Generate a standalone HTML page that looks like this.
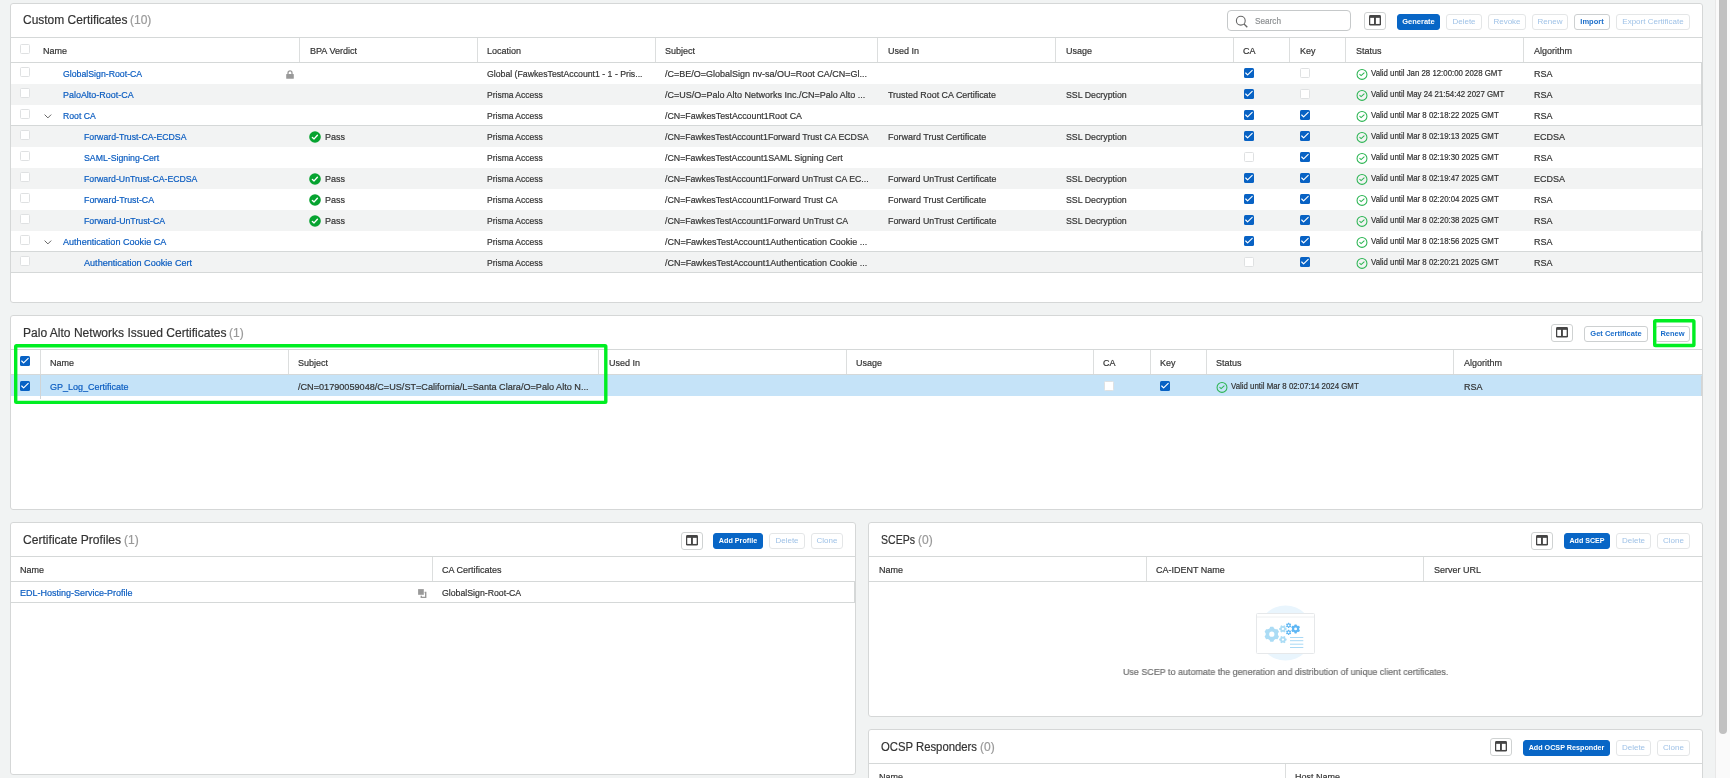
<!DOCTYPE html>
<html><head><meta charset="utf-8"><style>
html,body{margin:0;padding:0;}
body{width:1730px;height:778px;overflow:hidden;position:relative;background:#f1f3f3;will-change:transform;font-family:"Liberation Sans",sans-serif;}
.a{position:absolute;}
.t{position:absolute;white-space:nowrap;-webkit-text-stroke:0.2px currentColor;-webkit-font-smoothing:antialiased;}
.cbu{width:10px;height:10px;box-sizing:border-box;border:1px solid #dfe1e2;border-radius:1.5px;background:#fff;}
.cbc{width:10px;height:10px;border-radius:1.5px;background:#0862c4;}
.cbc svg{display:block;}
.colbtn{width:22px;height:18px;box-sizing:border-box;border:1px solid #cfd2d2;border-radius:3px;background:#fff;}
.btn{box-sizing:border-box;border-radius:3px;text-align:center;white-space:nowrap;}
.bp{background:#0866c6;border:1px solid #0866c6;color:#fff;font-weight:700;font-size:7.5px;}
.bs{background:#fff;border:1px solid #cdd0d1;color:#1a6dca;font-weight:700;font-size:7.5px;}
.bd{background:#fff;border:1px solid #e4e6e7;color:#9fc2e7;font-size:8px;}
</style></head><body>
<div class="a" style="left:1715px;top:0px;width:15px;height:778px;background:#fafafa;border-left:1px solid #e8e8e8;box-sizing:border-box"></div>
<div class="a" style="left:1719px;top:-10px;width:8px;height:744px;background:#c1c1c1;border-radius:4px"></div>
<div class="a" style="left:10px;top:3px;width:1693px;height:300px;background:#fff;border:1px solid #d5d7d7;border-radius:3px;box-sizing:border-box"></div>
<div class="t" style="left:23px;top:14.00px;font-size:12.500px;line-height:12.500px;color:#333;font-weight:400;transform:scaleX(0.9581);transform-origin:0 0;">Custom Certificates</div>
<div class="t" style="left:130.3px;top:14.00px;font-size:12.500px;line-height:12.500px;color:#999;font-weight:400;transform:scaleX(0.9608);transform-origin:0 0;">(10)</div>
<div class="a" style="left:1227px;top:10px;width:124px;height:21px;border:1px solid #c6c9ca;border-radius:4px;box-sizing:border-box;background:#fff"></div>
<svg class="a" style="left:1235px;top:15px" width="14" height="13" viewBox="0 0 14 13"><circle cx="5.8" cy="5.7" r="4.4" fill="none" stroke="#666" stroke-width="1.1"/><path d="M9 9 L12.3 12.2" stroke="#666" stroke-width="1.3"/></svg>
<div class="t" style="left:1255px;top:17.00px;font-size:9.300px;line-height:9.300px;color:#8d9092;font-weight:400;transform:scaleX(0.8824);transform-origin:0 0;">Search</div>
<div class="a colbtn" style="left:1364px;top:12px"></div><svg class="a" style="left:1369px;top:15px" width="12" height="11" viewBox="0 0 12 11"><rect x="0" y="0" width="12" height="10.6" rx="1.4" fill="#454545"/><rect x="1.25" y="2.85" width="3.75" height="6.1" fill="#fff"/><rect x="6.9" y="2.85" width="3.75" height="6.1" fill="#fff"/></svg>
<div class="a btn bp" style="left:1397px;top:14px;width:43px;height:16px;line-height:14px;">Generate</div>
<div class="a btn bd" style="left:1446px;top:14px;width:36px;height:16px;line-height:14px;">Delete</div>
<div class="a btn bd" style="left:1488px;top:14px;width:38px;height:16px;line-height:14px;">Revoke</div>
<div class="a btn bd" style="left:1532px;top:14px;width:36px;height:16px;line-height:14px;">Renew</div>
<div class="a btn bs" style="left:1574px;top:14px;width:36px;height:16px;line-height:14px;">Import</div>
<div class="a btn bd" style="left:1616px;top:14px;width:74px;height:16px;line-height:14px;">Export Certificate</div>
<div class="a" style="left:11px;top:37px;width:1691px;height:1px;background:#d5d8d8"></div>
<div class="a" style="left:11px;top:62px;width:1691px;height:1px;background:#d5d8d8"></div>
<div class="a cbu" style="left:20px;top:44px"></div>
<div class="t" style="left:42.6px;top:46.00px;font-size:9.500px;line-height:9.500px;color:#333;font-weight:400;transform:scaleX(0.9474);transform-origin:0 0;">Name</div>
<div class="t" style="left:310px;top:46.00px;font-size:9.500px;line-height:9.500px;color:#333;font-weight:400;transform:scaleX(0.9502);transform-origin:0 0;">BPA Verdict</div>
<div class="t" style="left:487px;top:46.00px;font-size:9.500px;line-height:9.500px;color:#333;font-weight:400;transform:scaleX(0.9474);transform-origin:0 0;">Location</div>
<div class="t" style="left:665px;top:46.00px;font-size:9.500px;line-height:9.500px;color:#333;font-weight:400;transform:scaleX(0.9474);transform-origin:0 0;">Subject</div>
<div class="t" style="left:888px;top:46.00px;font-size:9.500px;line-height:9.500px;color:#333;font-weight:400;transform:scaleX(0.9474);transform-origin:0 0;">Used In</div>
<div class="t" style="left:1066px;top:46.00px;font-size:9.500px;line-height:9.500px;color:#333;font-weight:400;transform:scaleX(0.9474);transform-origin:0 0;">Usage</div>
<div class="t" style="left:1243px;top:46.00px;font-size:9.500px;line-height:9.500px;color:#333;font-weight:400;transform:scaleX(0.9474);transform-origin:0 0;">CA</div>
<div class="t" style="left:1299.5px;top:46.00px;font-size:9.500px;line-height:9.500px;color:#333;font-weight:400;transform:scaleX(0.9474);transform-origin:0 0;">Key</div>
<div class="t" style="left:1355.5px;top:46.00px;font-size:9.500px;line-height:9.500px;color:#333;font-weight:400;transform:scaleX(0.9474);transform-origin:0 0;">Status</div>
<div class="t" style="left:1533.5px;top:46.00px;font-size:9.500px;line-height:9.500px;color:#333;font-weight:400;transform:scaleX(0.9474);transform-origin:0 0;">Algorithm</div>
<div class="a" style="left:299px;top:38px;width:1px;height:24px;background:#dcdede"></div>
<div class="a" style="left:477px;top:38px;width:1px;height:24px;background:#dcdede"></div>
<div class="a" style="left:655px;top:38px;width:1px;height:24px;background:#dcdede"></div>
<div class="a" style="left:877px;top:38px;width:1px;height:24px;background:#dcdede"></div>
<div class="a" style="left:1055px;top:38px;width:1px;height:24px;background:#dcdede"></div>
<div class="a" style="left:1233px;top:38px;width:1px;height:24px;background:#dcdede"></div>
<div class="a" style="left:1289px;top:38px;width:1px;height:24px;background:#dcdede"></div>
<div class="a" style="left:1345px;top:38px;width:1px;height:24px;background:#dcdede"></div>
<div class="a" style="left:1523px;top:38px;width:1px;height:24px;background:#dcdede"></div>
<div class="a" style="left:1701px;top:63px;width:1px;height:21px;background:#d5d8d8"></div>
<div class="a cbu" style="left:20px;top:67px"></div>
<div class="t" style="left:63px;top:69.00px;font-size:9.500px;line-height:9.500px;color:#0a5cc0;font-weight:400;transform:scaleX(0.9201);transform-origin:0 0;">GlobalSign-Root-CA</div>
<svg class="a" style="left:286px;top:70px" width="8" height="9" viewBox="0 0 8 9"><path d="M2 4 V2.9 A2 2 0 0 1 6 2.9 V4" fill="none" stroke="#999" stroke-width="1.3"/><rect x="0.2" y="4" width="7.6" height="4.8" rx="0.6" fill="#999"/></svg>
<div class="t" style="left:487px;top:69.00px;font-size:9.500px;line-height:9.500px;color:#333;font-weight:400;transform:scaleX(0.9175);transform-origin:0 0;">Global (FawkesTestAccount1 - 1 - Pris...</div>
<div class="t" style="left:665px;top:69.00px;font-size:9.500px;line-height:9.500px;color:#333;font-weight:400;transform:scaleX(0.9474);transform-origin:0 0;">/C=BE/O=GlobalSign nv-sa/OU=Root CA/CN=Gl...</div>
<div class="a cbc" style="left:1244px;top:68px"><svg width="10" height="10" viewBox="0 0 10 10"><path d="M1.7 5.0 L3.6 6.9 L8.2 2.4" fill="none" stroke="#fff" stroke-width="1.15" stroke-linecap="round" stroke-linejoin="round"/></svg></div>
<div class="a cbu" style="left:1300px;top:68px"></div>
<svg class="a" style="left:1355.5px;top:68px" width="12" height="13" viewBox="0 0 12 13"><circle cx="6" cy="6.4" r="4.95" fill="none" stroke="#2cb553" stroke-width="1.05"/><path d="M3.5 6.2 L5.1 7.6 L8.4 4.6" fill="none" stroke="#2cb553" stroke-width="1.05"/></svg>
<div class="t" style="left:1371px;top:69.00px;font-size:8.500px;line-height:8.500px;color:#333;font-weight:400;transform:scaleX(0.9235);transform-origin:0 0;">Valid until Jan 28 12:00:00 2028 GMT</div>
<div class="t" style="left:1533.5px;top:69.00px;font-size:9.500px;line-height:9.500px;color:#333;font-weight:400;transform:scaleX(0.9474);transform-origin:0 0;">RSA</div>
<div class="a" style="left:11px;top:84px;width:1691px;height:21px;background:#f2f3f3"></div>
<div class="a" style="left:1701px;top:84px;width:1px;height:21px;background:#d5d8d8"></div>
<div class="a cbu" style="left:20px;top:88px"></div>
<div class="t" style="left:63px;top:90.00px;font-size:9.500px;line-height:9.500px;color:#0a5cc0;font-weight:400;transform:scaleX(0.9416);transform-origin:0 0;">PaloAlto-Root-CA</div>
<div class="t" style="left:487px;top:90.00px;font-size:9.500px;line-height:9.500px;color:#333;font-weight:400;transform:scaleX(0.8957);transform-origin:0 0;">Prisma Access</div>
<div class="t" style="left:665px;top:90.00px;font-size:9.500px;line-height:9.500px;color:#333;font-weight:400;transform:scaleX(0.9474);transform-origin:0 0;">/C=US/O=Palo Alto Networks Inc./CN=Palo Alto ...</div>
<div class="t" style="left:888px;top:90.00px;font-size:9.500px;line-height:9.500px;color:#333;font-weight:400;transform:scaleX(0.9368);transform-origin:0 0;">Trusted Root CA Certificate</div>
<div class="t" style="left:1066px;top:90.00px;font-size:9.500px;line-height:9.500px;color:#333;font-weight:400;transform:scaleX(0.9245);transform-origin:0 0;">SSL Decryption</div>
<div class="a cbc" style="left:1244px;top:89px"><svg width="10" height="10" viewBox="0 0 10 10"><path d="M1.7 5.0 L3.6 6.9 L8.2 2.4" fill="none" stroke="#fff" stroke-width="1.15" stroke-linecap="round" stroke-linejoin="round"/></svg></div>
<div class="a cbu" style="left:1300px;top:89px"></div>
<svg class="a" style="left:1355.5px;top:89px" width="12" height="13" viewBox="0 0 12 13"><circle cx="6" cy="6.4" r="4.95" fill="none" stroke="#2cb553" stroke-width="1.05"/><path d="M3.5 6.2 L5.1 7.6 L8.4 4.6" fill="none" stroke="#2cb553" stroke-width="1.05"/></svg>
<div class="t" style="left:1371px;top:90.00px;font-size:8.500px;line-height:8.500px;color:#333;font-weight:400;transform:scaleX(0.9235);transform-origin:0 0;">Valid until May 24 21:54:42 2027 GMT</div>
<div class="t" style="left:1533.5px;top:90.00px;font-size:9.500px;line-height:9.500px;color:#333;font-weight:400;transform:scaleX(0.9474);transform-origin:0 0;">RSA</div>
<div class="a" style="left:11px;top:125px;width:1691px;height:1px;background:#d5d8d8"></div>
<div class="a" style="left:1701px;top:105px;width:1px;height:21px;background:#d5d8d8"></div>
<div class="a cbu" style="left:20px;top:109px"></div>
<svg class="a" style="left:44px;top:114px" width="8" height="5" viewBox="0 0 8 5"><path d="M0.6 0.6 L3.9 3.9 L7.2 0.6" fill="none" stroke="#555" stroke-width="0.9"/></svg>
<div class="t" style="left:63px;top:111.00px;font-size:9.500px;line-height:9.500px;color:#0a5cc0;font-weight:400;transform:scaleX(0.9135);transform-origin:0 0;">Root CA</div>
<div class="t" style="left:487px;top:111.00px;font-size:9.500px;line-height:9.500px;color:#333;font-weight:400;transform:scaleX(0.8957);transform-origin:0 0;">Prisma Access</div>
<div class="t" style="left:665px;top:111.00px;font-size:9.500px;line-height:9.500px;color:#333;font-weight:400;transform:scaleX(0.9283);transform-origin:0 0;">/CN=FawkesTestAccount1Root CA</div>
<div class="a cbc" style="left:1244px;top:110px"><svg width="10" height="10" viewBox="0 0 10 10"><path d="M1.7 5.0 L3.6 6.9 L8.2 2.4" fill="none" stroke="#fff" stroke-width="1.15" stroke-linecap="round" stroke-linejoin="round"/></svg></div>
<div class="a cbc" style="left:1300px;top:110px"><svg width="10" height="10" viewBox="0 0 10 10"><path d="M1.7 5.0 L3.6 6.9 L8.2 2.4" fill="none" stroke="#fff" stroke-width="1.15" stroke-linecap="round" stroke-linejoin="round"/></svg></div>
<svg class="a" style="left:1355.5px;top:110px" width="12" height="13" viewBox="0 0 12 13"><circle cx="6" cy="6.4" r="4.95" fill="none" stroke="#2cb553" stroke-width="1.05"/><path d="M3.5 6.2 L5.1 7.6 L8.4 4.6" fill="none" stroke="#2cb553" stroke-width="1.05"/></svg>
<div class="t" style="left:1371px;top:111.00px;font-size:8.500px;line-height:8.500px;color:#333;font-weight:400;transform:scaleX(0.9235);transform-origin:0 0;">Valid until Mar 8 02:18:22 2025 GMT</div>
<div class="t" style="left:1533.5px;top:111.00px;font-size:9.500px;line-height:9.500px;color:#333;font-weight:400;transform:scaleX(0.9474);transform-origin:0 0;">RSA</div>
<div class="a" style="left:11px;top:126px;width:1691px;height:21px;background:#f2f3f3"></div>
<div class="a cbu" style="left:20px;top:130px"></div>
<div class="t" style="left:84px;top:132.00px;font-size:9.500px;line-height:9.500px;color:#0a5cc0;font-weight:400;transform:scaleX(0.9188);transform-origin:0 0;">Forward-Trust-CA-ECDSA</div>
<svg class="a" style="left:309px;top:131px" width="12" height="12" viewBox="0 0 12 12"><circle cx="6" cy="6" r="5.8" fill="#06a330"/><path d="M3.4 6.4 L5.1 7.9 L8.4 4.3" fill="none" stroke="#fff" stroke-width="1.4" stroke-linecap="round" stroke-linejoin="round"/></svg>
<div class="t" style="left:325px;top:132.00px;font-size:9.500px;line-height:9.500px;color:#333;font-weight:400;transform:scaleX(0.9474);transform-origin:0 0;">Pass</div>
<div class="t" style="left:487px;top:132.00px;font-size:9.500px;line-height:9.500px;color:#333;font-weight:400;transform:scaleX(0.8957);transform-origin:0 0;">Prisma Access</div>
<div class="t" style="left:665px;top:132.00px;font-size:9.500px;line-height:9.500px;color:#333;font-weight:400;transform:scaleX(0.9214);transform-origin:0 0;">/CN=FawkesTestAccount1Forward Trust CA ECDSA</div>
<div class="t" style="left:888px;top:132.00px;font-size:9.500px;line-height:9.500px;color:#333;font-weight:400;transform:scaleX(0.9451);transform-origin:0 0;">Forward Trust Certificate</div>
<div class="t" style="left:1066px;top:132.00px;font-size:9.500px;line-height:9.500px;color:#333;font-weight:400;transform:scaleX(0.9245);transform-origin:0 0;">SSL Decryption</div>
<div class="a cbc" style="left:1244px;top:131px"><svg width="10" height="10" viewBox="0 0 10 10"><path d="M1.7 5.0 L3.6 6.9 L8.2 2.4" fill="none" stroke="#fff" stroke-width="1.15" stroke-linecap="round" stroke-linejoin="round"/></svg></div>
<div class="a cbc" style="left:1300px;top:131px"><svg width="10" height="10" viewBox="0 0 10 10"><path d="M1.7 5.0 L3.6 6.9 L8.2 2.4" fill="none" stroke="#fff" stroke-width="1.15" stroke-linecap="round" stroke-linejoin="round"/></svg></div>
<svg class="a" style="left:1355.5px;top:131px" width="12" height="13" viewBox="0 0 12 13"><circle cx="6" cy="6.4" r="4.95" fill="none" stroke="#2cb553" stroke-width="1.05"/><path d="M3.5 6.2 L5.1 7.6 L8.4 4.6" fill="none" stroke="#2cb553" stroke-width="1.05"/></svg>
<div class="t" style="left:1371px;top:132.00px;font-size:8.500px;line-height:8.500px;color:#333;font-weight:400;transform:scaleX(0.9235);transform-origin:0 0;">Valid until Mar 8 02:19:13 2025 GMT</div>
<div class="t" style="left:1533.5px;top:132.00px;font-size:9.500px;line-height:9.500px;color:#333;font-weight:400;transform:scaleX(0.9474);transform-origin:0 0;">ECDSA</div>
<div class="a cbu" style="left:20px;top:151px"></div>
<div class="t" style="left:84px;top:153.00px;font-size:9.500px;line-height:9.500px;color:#0a5cc0;font-weight:400;transform:scaleX(0.9189);transform-origin:0 0;">SAML-Signing-Cert</div>
<div class="t" style="left:487px;top:153.00px;font-size:9.500px;line-height:9.500px;color:#333;font-weight:400;transform:scaleX(0.8957);transform-origin:0 0;">Prisma Access</div>
<div class="t" style="left:665px;top:153.00px;font-size:9.500px;line-height:9.500px;color:#333;font-weight:400;transform:scaleX(0.9245);transform-origin:0 0;">/CN=FawkesTestAccount1SAML Signing Cert</div>
<div class="a cbu" style="left:1244px;top:152px"></div>
<div class="a cbc" style="left:1300px;top:152px"><svg width="10" height="10" viewBox="0 0 10 10"><path d="M1.7 5.0 L3.6 6.9 L8.2 2.4" fill="none" stroke="#fff" stroke-width="1.15" stroke-linecap="round" stroke-linejoin="round"/></svg></div>
<svg class="a" style="left:1355.5px;top:152px" width="12" height="13" viewBox="0 0 12 13"><circle cx="6" cy="6.4" r="4.95" fill="none" stroke="#2cb553" stroke-width="1.05"/><path d="M3.5 6.2 L5.1 7.6 L8.4 4.6" fill="none" stroke="#2cb553" stroke-width="1.05"/></svg>
<div class="t" style="left:1371px;top:153.00px;font-size:8.500px;line-height:8.500px;color:#333;font-weight:400;transform:scaleX(0.9235);transform-origin:0 0;">Valid until Mar 8 02:19:30 2025 GMT</div>
<div class="t" style="left:1533.5px;top:153.00px;font-size:9.500px;line-height:9.500px;color:#333;font-weight:400;transform:scaleX(0.9474);transform-origin:0 0;">RSA</div>
<div class="a" style="left:11px;top:168px;width:1691px;height:21px;background:#f2f3f3"></div>
<div class="a cbu" style="left:20px;top:172px"></div>
<div class="t" style="left:84px;top:174.00px;font-size:9.500px;line-height:9.500px;color:#0a5cc0;font-weight:400;transform:scaleX(0.9167);transform-origin:0 0;">Forward-UnTrust-CA-ECDSA</div>
<svg class="a" style="left:309px;top:173px" width="12" height="12" viewBox="0 0 12 12"><circle cx="6" cy="6" r="5.8" fill="#06a330"/><path d="M3.4 6.4 L5.1 7.9 L8.4 4.3" fill="none" stroke="#fff" stroke-width="1.4" stroke-linecap="round" stroke-linejoin="round"/></svg>
<div class="t" style="left:325px;top:174.00px;font-size:9.500px;line-height:9.500px;color:#333;font-weight:400;transform:scaleX(0.9474);transform-origin:0 0;">Pass</div>
<div class="t" style="left:487px;top:174.00px;font-size:9.500px;line-height:9.500px;color:#333;font-weight:400;transform:scaleX(0.8957);transform-origin:0 0;">Prisma Access</div>
<div class="t" style="left:665px;top:174.00px;font-size:9.500px;line-height:9.500px;color:#333;font-weight:400;transform:scaleX(0.9186);transform-origin:0 0;">/CN=FawkesTestAccount1Forward UnTrust CA EC...</div>
<div class="t" style="left:888px;top:174.00px;font-size:9.500px;line-height:9.500px;color:#333;font-weight:400;transform:scaleX(0.9319);transform-origin:0 0;">Forward UnTrust Certificate</div>
<div class="t" style="left:1066px;top:174.00px;font-size:9.500px;line-height:9.500px;color:#333;font-weight:400;transform:scaleX(0.9245);transform-origin:0 0;">SSL Decryption</div>
<div class="a cbc" style="left:1244px;top:173px"><svg width="10" height="10" viewBox="0 0 10 10"><path d="M1.7 5.0 L3.6 6.9 L8.2 2.4" fill="none" stroke="#fff" stroke-width="1.15" stroke-linecap="round" stroke-linejoin="round"/></svg></div>
<div class="a cbc" style="left:1300px;top:173px"><svg width="10" height="10" viewBox="0 0 10 10"><path d="M1.7 5.0 L3.6 6.9 L8.2 2.4" fill="none" stroke="#fff" stroke-width="1.15" stroke-linecap="round" stroke-linejoin="round"/></svg></div>
<svg class="a" style="left:1355.5px;top:173px" width="12" height="13" viewBox="0 0 12 13"><circle cx="6" cy="6.4" r="4.95" fill="none" stroke="#2cb553" stroke-width="1.05"/><path d="M3.5 6.2 L5.1 7.6 L8.4 4.6" fill="none" stroke="#2cb553" stroke-width="1.05"/></svg>
<div class="t" style="left:1371px;top:174.00px;font-size:8.500px;line-height:8.500px;color:#333;font-weight:400;transform:scaleX(0.9235);transform-origin:0 0;">Valid until Mar 8 02:19:47 2025 GMT</div>
<div class="t" style="left:1533.5px;top:174.00px;font-size:9.500px;line-height:9.500px;color:#333;font-weight:400;transform:scaleX(0.9474);transform-origin:0 0;">ECDSA</div>
<div class="a cbu" style="left:20px;top:193px"></div>
<div class="t" style="left:84px;top:195.00px;font-size:9.500px;line-height:9.500px;color:#0a5cc0;font-weight:400;transform:scaleX(0.9266);transform-origin:0 0;">Forward-Trust-CA</div>
<svg class="a" style="left:309px;top:194px" width="12" height="12" viewBox="0 0 12 12"><circle cx="6" cy="6" r="5.8" fill="#06a330"/><path d="M3.4 6.4 L5.1 7.9 L8.4 4.3" fill="none" stroke="#fff" stroke-width="1.4" stroke-linecap="round" stroke-linejoin="round"/></svg>
<div class="t" style="left:325px;top:195.00px;font-size:9.500px;line-height:9.500px;color:#333;font-weight:400;transform:scaleX(0.9474);transform-origin:0 0;">Pass</div>
<div class="t" style="left:487px;top:195.00px;font-size:9.500px;line-height:9.500px;color:#333;font-weight:400;transform:scaleX(0.8957);transform-origin:0 0;">Prisma Access</div>
<div class="t" style="left:665px;top:195.00px;font-size:9.500px;line-height:9.500px;color:#333;font-weight:400;transform:scaleX(0.9280);transform-origin:0 0;">/CN=FawkesTestAccount1Forward Trust CA</div>
<div class="t" style="left:888px;top:195.00px;font-size:9.500px;line-height:9.500px;color:#333;font-weight:400;transform:scaleX(0.9451);transform-origin:0 0;">Forward Trust Certificate</div>
<div class="t" style="left:1066px;top:195.00px;font-size:9.500px;line-height:9.500px;color:#333;font-weight:400;transform:scaleX(0.9245);transform-origin:0 0;">SSL Decryption</div>
<div class="a cbc" style="left:1244px;top:194px"><svg width="10" height="10" viewBox="0 0 10 10"><path d="M1.7 5.0 L3.6 6.9 L8.2 2.4" fill="none" stroke="#fff" stroke-width="1.15" stroke-linecap="round" stroke-linejoin="round"/></svg></div>
<div class="a cbc" style="left:1300px;top:194px"><svg width="10" height="10" viewBox="0 0 10 10"><path d="M1.7 5.0 L3.6 6.9 L8.2 2.4" fill="none" stroke="#fff" stroke-width="1.15" stroke-linecap="round" stroke-linejoin="round"/></svg></div>
<svg class="a" style="left:1355.5px;top:194px" width="12" height="13" viewBox="0 0 12 13"><circle cx="6" cy="6.4" r="4.95" fill="none" stroke="#2cb553" stroke-width="1.05"/><path d="M3.5 6.2 L5.1 7.6 L8.4 4.6" fill="none" stroke="#2cb553" stroke-width="1.05"/></svg>
<div class="t" style="left:1371px;top:195.00px;font-size:8.500px;line-height:8.500px;color:#333;font-weight:400;transform:scaleX(0.9235);transform-origin:0 0;">Valid until Mar 8 02:20:04 2025 GMT</div>
<div class="t" style="left:1533.5px;top:195.00px;font-size:9.500px;line-height:9.500px;color:#333;font-weight:400;transform:scaleX(0.9474);transform-origin:0 0;">RSA</div>
<div class="a" style="left:11px;top:210px;width:1691px;height:21px;background:#f2f3f3"></div>
<div class="a cbu" style="left:20px;top:214px"></div>
<div class="t" style="left:84px;top:216.00px;font-size:9.500px;line-height:9.500px;color:#0a5cc0;font-weight:400;transform:scaleX(0.9247);transform-origin:0 0;">Forward-UnTrust-CA</div>
<svg class="a" style="left:309px;top:215px" width="12" height="12" viewBox="0 0 12 12"><circle cx="6" cy="6" r="5.8" fill="#06a330"/><path d="M3.4 6.4 L5.1 7.9 L8.4 4.3" fill="none" stroke="#fff" stroke-width="1.4" stroke-linecap="round" stroke-linejoin="round"/></svg>
<div class="t" style="left:325px;top:216.00px;font-size:9.500px;line-height:9.500px;color:#333;font-weight:400;transform:scaleX(0.9474);transform-origin:0 0;">Pass</div>
<div class="t" style="left:487px;top:216.00px;font-size:9.500px;line-height:9.500px;color:#333;font-weight:400;transform:scaleX(0.8957);transform-origin:0 0;">Prisma Access</div>
<div class="t" style="left:665px;top:216.00px;font-size:9.500px;line-height:9.500px;color:#333;font-weight:400;transform:scaleX(0.9233);transform-origin:0 0;">/CN=FawkesTestAccount1Forward UnTrust CA</div>
<div class="t" style="left:888px;top:216.00px;font-size:9.500px;line-height:9.500px;color:#333;font-weight:400;transform:scaleX(0.9319);transform-origin:0 0;">Forward UnTrust Certificate</div>
<div class="t" style="left:1066px;top:216.00px;font-size:9.500px;line-height:9.500px;color:#333;font-weight:400;transform:scaleX(0.9245);transform-origin:0 0;">SSL Decryption</div>
<div class="a cbc" style="left:1244px;top:215px"><svg width="10" height="10" viewBox="0 0 10 10"><path d="M1.7 5.0 L3.6 6.9 L8.2 2.4" fill="none" stroke="#fff" stroke-width="1.15" stroke-linecap="round" stroke-linejoin="round"/></svg></div>
<div class="a cbc" style="left:1300px;top:215px"><svg width="10" height="10" viewBox="0 0 10 10"><path d="M1.7 5.0 L3.6 6.9 L8.2 2.4" fill="none" stroke="#fff" stroke-width="1.15" stroke-linecap="round" stroke-linejoin="round"/></svg></div>
<svg class="a" style="left:1355.5px;top:215px" width="12" height="13" viewBox="0 0 12 13"><circle cx="6" cy="6.4" r="4.95" fill="none" stroke="#2cb553" stroke-width="1.05"/><path d="M3.5 6.2 L5.1 7.6 L8.4 4.6" fill="none" stroke="#2cb553" stroke-width="1.05"/></svg>
<div class="t" style="left:1371px;top:216.00px;font-size:8.500px;line-height:8.500px;color:#333;font-weight:400;transform:scaleX(0.9235);transform-origin:0 0;">Valid until Mar 8 02:20:38 2025 GMT</div>
<div class="t" style="left:1533.5px;top:216.00px;font-size:9.500px;line-height:9.500px;color:#333;font-weight:400;transform:scaleX(0.9474);transform-origin:0 0;">RSA</div>
<div class="a" style="left:11px;top:251px;width:1691px;height:1px;background:#d5d8d8"></div>
<div class="a" style="left:1701px;top:231px;width:1px;height:21px;background:#d5d8d8"></div>
<div class="a cbu" style="left:20px;top:235px"></div>
<svg class="a" style="left:44px;top:240px" width="8" height="5" viewBox="0 0 8 5"><path d="M0.6 0.6 L3.9 3.9 L7.2 0.6" fill="none" stroke="#555" stroke-width="0.9"/></svg>
<div class="t" style="left:63px;top:237.00px;font-size:9.500px;line-height:9.500px;color:#0a5cc0;font-weight:400;transform:scaleX(0.9542);transform-origin:0 0;">Authentication Cookie CA</div>
<div class="t" style="left:487px;top:237.00px;font-size:9.500px;line-height:9.500px;color:#333;font-weight:400;transform:scaleX(0.8957);transform-origin:0 0;">Prisma Access</div>
<div class="t" style="left:665px;top:237.00px;font-size:9.500px;line-height:9.500px;color:#333;font-weight:400;transform:scaleX(0.9420);transform-origin:0 0;">/CN=FawkesTestAccount1Authentication Cookie ...</div>
<div class="a cbc" style="left:1244px;top:236px"><svg width="10" height="10" viewBox="0 0 10 10"><path d="M1.7 5.0 L3.6 6.9 L8.2 2.4" fill="none" stroke="#fff" stroke-width="1.15" stroke-linecap="round" stroke-linejoin="round"/></svg></div>
<div class="a cbc" style="left:1300px;top:236px"><svg width="10" height="10" viewBox="0 0 10 10"><path d="M1.7 5.0 L3.6 6.9 L8.2 2.4" fill="none" stroke="#fff" stroke-width="1.15" stroke-linecap="round" stroke-linejoin="round"/></svg></div>
<svg class="a" style="left:1355.5px;top:236px" width="12" height="13" viewBox="0 0 12 13"><circle cx="6" cy="6.4" r="4.95" fill="none" stroke="#2cb553" stroke-width="1.05"/><path d="M3.5 6.2 L5.1 7.6 L8.4 4.6" fill="none" stroke="#2cb553" stroke-width="1.05"/></svg>
<div class="t" style="left:1371px;top:237.00px;font-size:8.500px;line-height:8.500px;color:#333;font-weight:400;transform:scaleX(0.9235);transform-origin:0 0;">Valid until Mar 8 02:18:56 2025 GMT</div>
<div class="t" style="left:1533.5px;top:237.00px;font-size:9.500px;line-height:9.500px;color:#333;font-weight:400;transform:scaleX(0.9474);transform-origin:0 0;">RSA</div>
<div class="a" style="left:11px;top:252px;width:1691px;height:21px;background:#f2f3f3"></div>
<div class="a" style="left:11px;top:272px;width:1691px;height:1px;background:#d5d8d8"></div>
<div class="a cbu" style="left:20px;top:256px"></div>
<div class="t" style="left:84px;top:258.00px;font-size:9.500px;line-height:9.500px;color:#0a5cc0;font-weight:400;transform:scaleX(0.9565);transform-origin:0 0;">Authentication Cookie Cert</div>
<div class="t" style="left:487px;top:258.00px;font-size:9.500px;line-height:9.500px;color:#333;font-weight:400;transform:scaleX(0.8957);transform-origin:0 0;">Prisma Access</div>
<div class="t" style="left:665px;top:258.00px;font-size:9.500px;line-height:9.500px;color:#333;font-weight:400;transform:scaleX(0.9420);transform-origin:0 0;">/CN=FawkesTestAccount1Authentication Cookie ...</div>
<div class="a cbu" style="left:1244px;top:257px"></div>
<div class="a cbc" style="left:1300px;top:257px"><svg width="10" height="10" viewBox="0 0 10 10"><path d="M1.7 5.0 L3.6 6.9 L8.2 2.4" fill="none" stroke="#fff" stroke-width="1.15" stroke-linecap="round" stroke-linejoin="round"/></svg></div>
<svg class="a" style="left:1355.5px;top:257px" width="12" height="13" viewBox="0 0 12 13"><circle cx="6" cy="6.4" r="4.95" fill="none" stroke="#2cb553" stroke-width="1.05"/><path d="M3.5 6.2 L5.1 7.6 L8.4 4.6" fill="none" stroke="#2cb553" stroke-width="1.05"/></svg>
<div class="t" style="left:1371px;top:258.00px;font-size:8.500px;line-height:8.500px;color:#333;font-weight:400;transform:scaleX(0.9235);transform-origin:0 0;">Valid until Mar 8 02:20:21 2025 GMT</div>
<div class="t" style="left:1533.5px;top:258.00px;font-size:9.500px;line-height:9.500px;color:#333;font-weight:400;transform:scaleX(0.9474);transform-origin:0 0;">RSA</div>
<div class="a" style="left:10px;top:315px;width:1693px;height:195px;background:#fff;border:1px solid #d5d7d7;border-radius:3px;box-sizing:border-box"></div>
<div class="t" style="left:23px;top:327.00px;font-size:12.500px;line-height:12.500px;color:#333;font-weight:400;transform:scaleX(0.9640);transform-origin:0 0;">Palo Alto Networks Issued Certificates</div>
<div class="t" style="left:228.9px;top:327.00px;font-size:12.500px;line-height:12.500px;color:#999;font-weight:400;transform:scaleX(0.9608);transform-origin:0 0;">(1)</div>
<div class="a colbtn" style="left:1551px;top:324px"></div><svg class="a" style="left:1556px;top:327px" width="12" height="11" viewBox="0 0 12 11"><rect x="0" y="0" width="12" height="10.6" rx="1.4" fill="#454545"/><rect x="1.25" y="2.85" width="3.75" height="6.1" fill="#fff"/><rect x="6.9" y="2.85" width="3.75" height="6.1" fill="#fff"/></svg>
<div class="a btn bs" style="left:1584px;top:326px;width:64px;height:16px;line-height:14px;">Get Certificate</div>
<div class="a btn bs" style="left:1655px;top:326px;width:35px;height:16px;line-height:14px;">Renew</div>
<div class="a" style="left:11px;top:349px;width:1691px;height:1px;background:#d5d8d8"></div>
<div class="a" style="left:11px;top:374px;width:1691px;height:1px;background:#d5d8d8"></div>
<div class="a cbc" style="left:20px;top:356px"><svg width="10" height="10" viewBox="0 0 10 10"><path d="M1.7 5.0 L3.6 6.9 L8.2 2.4" fill="none" stroke="#fff" stroke-width="1.15" stroke-linecap="round" stroke-linejoin="round"/></svg></div>
<div class="t" style="left:49.6px;top:358.00px;font-size:9.500px;line-height:9.500px;color:#333;font-weight:400;transform:scaleX(0.9474);transform-origin:0 0;">Name</div>
<div class="t" style="left:298px;top:358.00px;font-size:9.500px;line-height:9.500px;color:#333;font-weight:400;transform:scaleX(0.9474);transform-origin:0 0;">Subject</div>
<div class="t" style="left:608.7px;top:358.00px;font-size:9.500px;line-height:9.500px;color:#333;font-weight:400;transform:scaleX(0.9474);transform-origin:0 0;">Used In</div>
<div class="t" style="left:856.2px;top:358.00px;font-size:9.500px;line-height:9.500px;color:#333;font-weight:400;transform:scaleX(0.9474);transform-origin:0 0;">Usage</div>
<div class="t" style="left:1103.3px;top:358.00px;font-size:9.500px;line-height:9.500px;color:#333;font-weight:400;transform:scaleX(0.9474);transform-origin:0 0;">CA</div>
<div class="t" style="left:1159.5px;top:358.00px;font-size:9.500px;line-height:9.500px;color:#333;font-weight:400;transform:scaleX(0.9474);transform-origin:0 0;">Key</div>
<div class="t" style="left:1215.8px;top:358.00px;font-size:9.500px;line-height:9.500px;color:#333;font-weight:400;transform:scaleX(0.9474);transform-origin:0 0;">Status</div>
<div class="t" style="left:1463.6px;top:358.00px;font-size:9.500px;line-height:9.500px;color:#333;font-weight:400;transform:scaleX(0.9474);transform-origin:0 0;">Algorithm</div>
<div class="a" style="left:40px;top:350px;width:1px;height:24px;background:#dcdede"></div>
<div class="a" style="left:288px;top:350px;width:1px;height:24px;background:#dcdede"></div>
<div class="a" style="left:598px;top:350px;width:1px;height:24px;background:#dcdede"></div>
<div class="a" style="left:846px;top:350px;width:1px;height:24px;background:#dcdede"></div>
<div class="a" style="left:1093px;top:350px;width:1px;height:24px;background:#dcdede"></div>
<div class="a" style="left:1150px;top:350px;width:1px;height:24px;background:#dcdede"></div>
<div class="a" style="left:1206px;top:350px;width:1px;height:24px;background:#dcdede"></div>
<div class="a" style="left:1453px;top:350px;width:1px;height:24px;background:#dcdede"></div>
<div class="a" style="left:11px;top:375px;width:1691px;height:21px;background:#c5e3f8"></div>
<div class="a" style="left:40px;top:375px;width:1px;height:24px;background:#d0d4d6"></div>
<div class="a" style="left:1701px;top:376px;width:1px;height:20px;background:#d3d5d5"></div>
<div class="a cbc" style="left:20px;top:381px"><svg width="10" height="10" viewBox="0 0 10 10"><path d="M1.7 5.0 L3.6 6.9 L8.2 2.4" fill="none" stroke="#fff" stroke-width="1.15" stroke-linecap="round" stroke-linejoin="round"/></svg></div>
<div class="t" style="left:49.6px;top:382.00px;font-size:9.500px;line-height:9.500px;color:#0a5cc0;font-weight:400;transform:scaleX(0.9474);transform-origin:0 0;">GP_Log_Certificate</div>
<div class="t" style="left:298px;top:382.00px;font-size:9.500px;line-height:9.500px;color:#333;font-weight:400;transform:scaleX(0.9592);transform-origin:0 0;">/CN=01790059048/C=US/ST=California/L=Santa Clara/O=Palo Alto N...</div>
<div class="a cbu" style="left:1104px;top:381px"></div>
<div class="a cbc" style="left:1160px;top:381px"><svg width="10" height="10" viewBox="0 0 10 10"><path d="M1.7 5.0 L3.6 6.9 L8.2 2.4" fill="none" stroke="#fff" stroke-width="1.15" stroke-linecap="round" stroke-linejoin="round"/></svg></div>
<svg class="a" style="left:1215.5px;top:381px" width="12" height="13" viewBox="0 0 12 13"><circle cx="6" cy="6.4" r="4.95" fill="none" stroke="#2cb553" stroke-width="1.05"/><path d="M3.5 6.2 L5.1 7.6 L8.4 4.6" fill="none" stroke="#2cb553" stroke-width="1.05"/></svg>
<div class="t" style="left:1231px;top:382.00px;font-size:8.500px;line-height:8.500px;color:#333;font-weight:400;transform:scaleX(0.9235);transform-origin:0 0;">Valid until Mar 8 02:07:14 2024 GMT</div>
<div class="t" style="left:1463.6px;top:382.00px;font-size:9.500px;line-height:9.500px;color:#333;font-weight:400;transform:scaleX(0.9474);transform-origin:0 0;">RSA</div>
<svg class="a" style="left:12.2px;top:342.2px" width="597.5" height="64.10000000000002"><rect x="3.7" y="3.7" width="590.1" height="56.700000000000024" rx="0.8" fill="none" stroke="#00ee22" stroke-width="3.4"/></svg>
<svg class="a" style="left:1650.8px;top:317.4px" width="46.600000000000136" height="32.200000000000045"><rect x="3.7" y="3.7" width="39.20000000000014" height="24.800000000000047" rx="0.8" fill="none" stroke="#00ee22" stroke-width="3.4"/></svg>
<div class="a" style="left:10px;top:522px;width:846px;height:253px;background:#fff;border:1px solid #d5d7d7;border-radius:3px;box-sizing:border-box"></div>
<div class="t" style="left:23px;top:534.00px;font-size:12.500px;line-height:12.500px;color:#333;font-weight:400;transform:scaleX(0.9671);transform-origin:0 0;">Certificate Profiles</div>
<div class="t" style="left:123.6px;top:534.00px;font-size:12.500px;line-height:12.500px;color:#999;font-weight:400;transform:scaleX(0.9608);transform-origin:0 0;">(1)</div>
<div class="a colbtn" style="left:681px;top:532px"></div><svg class="a" style="left:686px;top:535px" width="12" height="11" viewBox="0 0 12 11"><rect x="0" y="0" width="12" height="10.6" rx="1.4" fill="#454545"/><rect x="1.25" y="2.85" width="3.75" height="6.1" fill="#fff"/><rect x="6.9" y="2.85" width="3.75" height="6.1" fill="#fff"/></svg>
<div class="a btn bp" style="left:713px;top:533px;width:50px;height:16px;line-height:14px;font-size:7.2px;">Add Profile</div>
<div class="a btn bd" style="left:769px;top:533px;width:36px;height:16px;line-height:14px;">Delete</div>
<div class="a btn bd" style="left:811px;top:533px;width:32px;height:16px;line-height:14px;">Clone</div>
<div class="a" style="left:11px;top:556px;width:844px;height:1px;background:#d5d8d8"></div>
<div class="a" style="left:11px;top:581px;width:844px;height:1px;background:#d5d8d8"></div>
<div class="t" style="left:19.6px;top:565.00px;font-size:9.500px;line-height:9.500px;color:#333;font-weight:400;transform:scaleX(0.9474);transform-origin:0 0;">Name</div>
<div class="t" style="left:442px;top:565.00px;font-size:9.500px;line-height:9.500px;color:#333;font-weight:400;transform:scaleX(0.9474);transform-origin:0 0;">CA Certificates</div>
<div class="a" style="left:432px;top:557px;width:1px;height:24px;background:#dcdede"></div>
<div class="t" style="left:19.6px;top:588.00px;font-size:9.500px;line-height:9.500px;color:#0a5cc0;font-weight:400;transform:scaleX(0.9474);transform-origin:0 0;">EDL-Hosting-Service-Profile</div>
<svg class="a" style="left:417px;top:588px" width="11" height="11" viewBox="0 0 11 11"><rect x="1.1" y="1.1" width="5.7" height="5.7" fill="#999"/><path d="M7.6 4.5 H8.7 V9.4 H4.3 V7.8" fill="none" stroke="#999" stroke-width="1.4"/></svg>
<div class="t" style="left:442px;top:588.00px;font-size:9.500px;line-height:9.500px;color:#333;font-weight:400;transform:scaleX(0.9201);transform-origin:0 0;">GlobalSign-Root-CA</div>
<div class="a" style="left:11px;top:602px;width:844px;height:1px;background:#d5d8d8"></div>
<div class="a" style="left:854px;top:582px;width:1px;height:21px;background:#d5d8d8"></div>
<div class="a" style="left:868px;top:522px;width:835px;height:195px;background:#fff;border:1px solid #d5d7d7;border-radius:3px;box-sizing:border-box"></div>
<div class="t" style="left:881px;top:534.00px;font-size:12.500px;line-height:12.500px;color:#333;font-weight:400;transform:scaleX(0.8437);transform-origin:0 0;">SCEPs</div>
<div class="t" style="left:917.5px;top:534.00px;font-size:12.500px;line-height:12.500px;color:#999;font-weight:400;transform:scaleX(0.9608);transform-origin:0 0;">(0)</div>
<div class="a colbtn" style="left:1531px;top:532px"></div><svg class="a" style="left:1536px;top:535px" width="12" height="11" viewBox="0 0 12 11"><rect x="0" y="0" width="12" height="10.6" rx="1.4" fill="#454545"/><rect x="1.25" y="2.85" width="3.75" height="6.1" fill="#fff"/><rect x="6.9" y="2.85" width="3.75" height="6.1" fill="#fff"/></svg>
<div class="a btn bp" style="left:1564px;top:533px;width:46px;height:16px;line-height:14px;font-size:7.1px;">Add SCEP</div>
<div class="a btn bd" style="left:1616px;top:533px;width:35px;height:16px;line-height:14px;">Delete</div>
<div class="a btn bd" style="left:1657px;top:533px;width:33px;height:16px;line-height:14px;">Clone</div>
<div class="a" style="left:869px;top:556px;width:833px;height:1px;background:#d5d8d8"></div>
<div class="a" style="left:869px;top:581px;width:833px;height:1px;background:#d5d8d8"></div>
<div class="t" style="left:878.7px;top:565.00px;font-size:9.500px;line-height:9.500px;color:#333;font-weight:400;transform:scaleX(0.9474);transform-origin:0 0;">Name</div>
<div class="t" style="left:1155.8px;top:565.00px;font-size:9.500px;line-height:9.500px;color:#333;font-weight:400;transform:scaleX(0.9474);transform-origin:0 0;">CA-IDENT Name</div>
<div class="t" style="left:1433.5px;top:565.00px;font-size:9.500px;line-height:9.500px;color:#333;font-weight:400;transform:scaleX(0.9474);transform-origin:0 0;">Server URL</div>
<div class="a" style="left:1146px;top:557px;width:1px;height:24px;background:#dcdede"></div>
<div class="a" style="left:1423px;top:557px;width:1px;height:24px;background:#dcdede"></div>
<svg class="a" style="left:1250px;top:600px" width="72" height="66" viewBox="0 0 72 66">
<circle cx="35.5" cy="33" r="27.5" fill="#e9f5fd"/>
<rect x="6.5" y="13.5" width="58" height="40" rx="1" fill="#fff" stroke="#e6e8ea" stroke-width="1"/>
<line x1="7" y1="17" x2="64" y2="17" stroke="#eef0f1" stroke-width="1"/>
<path d="M24.08 28.44 L23.30 26.75 L20.30 26.75 L19.52 28.44 L17.95 29.34 L16.10 29.17 L14.60 31.78 L15.67 33.29 L15.67 35.11 L14.60 36.62 L16.10 39.23 L17.95 39.06 L19.52 39.96 L20.30 41.65 L23.30 41.65 L24.08 39.96 L25.65 39.06 L27.50 39.23 L29.00 36.62 L27.93 35.11 L27.93 33.29 L29.00 31.78 L27.50 29.17 L25.65 29.34 Z M24.40 34.20 A2.6 2.6 0 1 0 19.20 34.20 A2.6 2.6 0 1 0 24.40 34.20 Z" fill="#abdcf5" fill-rule="evenodd"/><path d="M35.60 29.97 L36.63 29.65 L36.63 28.15 L35.60 27.83 L35.17 27.10 L35.41 26.05 L34.11 25.30 L33.32 26.03 L32.48 26.03 L31.69 25.30 L30.39 26.05 L30.63 27.10 L30.20 27.83 L29.17 28.15 L29.17 29.65 L30.20 29.97 L30.63 30.70 L30.39 31.75 L31.69 32.50 L32.48 31.77 L33.32 31.77 L34.11 32.50 L35.41 31.75 L35.17 30.70 Z M34.05 28.90 A1.15 1.15 0 1 0 31.75 28.90 A1.15 1.15 0 1 0 34.05 28.90 Z" fill="#abdcf5" fill-rule="evenodd"/><path d="M35.60 40.67 L36.63 40.35 L36.63 38.85 L35.60 38.53 L35.17 37.80 L35.41 36.75 L34.11 36.00 L33.32 36.73 L32.48 36.73 L31.69 36.00 L30.39 36.75 L30.63 37.80 L30.20 38.53 L29.17 38.85 L29.17 40.35 L30.20 40.67 L30.63 41.40 L30.39 42.45 L31.69 43.20 L32.48 42.47 L33.32 42.47 L34.11 43.20 L35.41 42.45 L35.17 41.40 Z M34.05 39.60 A1.15 1.15 0 1 0 31.75 39.60 A1.15 1.15 0 1 0 34.05 39.60 Z" fill="#abdcf5" fill-rule="evenodd"/><path d="M39.34 23.54 L39.13 22.75 L38.07 22.75 L37.86 23.54 L37.36 23.83 L36.57 23.61 L36.04 24.54 L36.62 25.11 L36.62 25.69 L36.04 26.26 L36.57 27.19 L37.36 26.97 L37.86 27.26 L38.07 28.05 L39.13 28.05 L39.34 27.26 L39.84 26.97 L40.63 27.19 L41.16 26.26 L40.58 25.69 L40.58 25.11 L41.16 24.54 L40.63 23.61 L39.84 23.83 Z M39.50 25.40 A0.9 0.9 0 1 0 37.70 25.40 A0.9 0.9 0 1 0 39.50 25.40 Z" fill="#5db6f4" fill-rule="evenodd"/><path d="M39.34 30.54 L39.13 29.75 L38.07 29.75 L37.86 30.54 L37.36 30.83 L36.57 30.61 L36.04 31.54 L36.62 32.11 L36.62 32.69 L36.04 33.26 L36.57 34.19 L37.36 33.97 L37.86 34.26 L38.07 35.05 L39.13 35.05 L39.34 34.26 L39.84 33.97 L40.63 34.19 L41.16 33.26 L40.58 32.69 L40.58 32.11 L41.16 31.54 L40.63 30.61 L39.84 30.83 Z M39.50 32.40 A0.9 0.9 0 1 0 37.70 32.40 A0.9 0.9 0 1 0 39.50 32.40 Z" fill="#5db6f4" fill-rule="evenodd"/><path d="M46.93 25.55 L46.51 24.39 L44.69 24.39 L44.27 25.55 L43.36 26.08 L42.15 25.86 L41.24 27.43 L42.04 28.37 L42.04 29.43 L41.24 30.37 L42.15 31.94 L43.36 31.72 L44.27 32.25 L44.69 33.41 L46.51 33.41 L46.93 32.25 L47.84 31.72 L49.05 31.94 L49.96 30.37 L49.16 29.43 L49.16 28.37 L49.96 27.43 L49.05 25.86 L47.84 26.08 Z M47.05 28.90 A1.45 1.45 0 1 0 44.15 28.90 A1.45 1.45 0 1 0 47.05 28.90 Z" fill="#5db6f4" fill-rule="evenodd"/>
<g stroke="#a9d9f5" stroke-width="1"><line x1="40" y1="37.5" x2="53.3" y2="37.5"/><line x1="40" y1="40.7" x2="53.3" y2="40.7"/><line x1="40" y1="44.2" x2="53.3" y2="44.2"/><line x1="40" y1="47.5" x2="53.3" y2="47.5"/></g>
</svg>
<div class="t" style="left:1123.1px;top:667.00px;font-size:9.500px;line-height:9.500px;color:#6e6e6e;font-weight:400;transform:scaleX(0.9412);transform-origin:0 0;">Use SCEP to automate the generation and distribution of unique client certificates.</div>
<div class="a" style="left:868px;top:729px;width:835px;height:80px;background:#fff;border:1px solid #d5d7d7;border-radius:3px;box-sizing:border-box"></div>
<div class="t" style="left:881px;top:741.00px;font-size:12.500px;line-height:12.500px;color:#333;font-weight:400;transform:scaleX(0.9049);transform-origin:0 0;">OCSP Responders</div>
<div class="t" style="left:980px;top:741.00px;font-size:12.500px;line-height:12.500px;color:#999;font-weight:400;transform:scaleX(0.9608);transform-origin:0 0;">(0)</div>
<div class="a colbtn" style="left:1490px;top:738px"></div><svg class="a" style="left:1495px;top:741px" width="12" height="11" viewBox="0 0 12 11"><rect x="0" y="0" width="12" height="10.6" rx="1.4" fill="#454545"/><rect x="1.25" y="2.85" width="3.75" height="6.1" fill="#fff"/><rect x="6.9" y="2.85" width="3.75" height="6.1" fill="#fff"/></svg>
<div class="a btn bp" style="left:1523px;top:740px;width:87px;height:16px;line-height:14px;font-size:7.2px;">Add OCSP Responder</div>
<div class="a btn bd" style="left:1616px;top:740px;width:35px;height:16px;line-height:14px;">Delete</div>
<div class="a btn bd" style="left:1657px;top:740px;width:33px;height:16px;line-height:14px;">Clone</div>
<div class="a" style="left:869px;top:763px;width:833px;height:1px;background:#d5d8d8"></div>
<div class="t" style="left:878.8px;top:772.00px;font-size:9.500px;line-height:9.500px;color:#333;font-weight:400;transform:scaleX(0.9474);transform-origin:0 0;">Name</div>
<div class="t" style="left:1294.6px;top:772.00px;font-size:9.500px;line-height:9.500px;color:#333;font-weight:400;transform:scaleX(0.9474);transform-origin:0 0;">Host Name</div>
<div class="a" style="left:1285px;top:764px;width:1px;height:24px;background:#dcdede"></div>
</body></html>
